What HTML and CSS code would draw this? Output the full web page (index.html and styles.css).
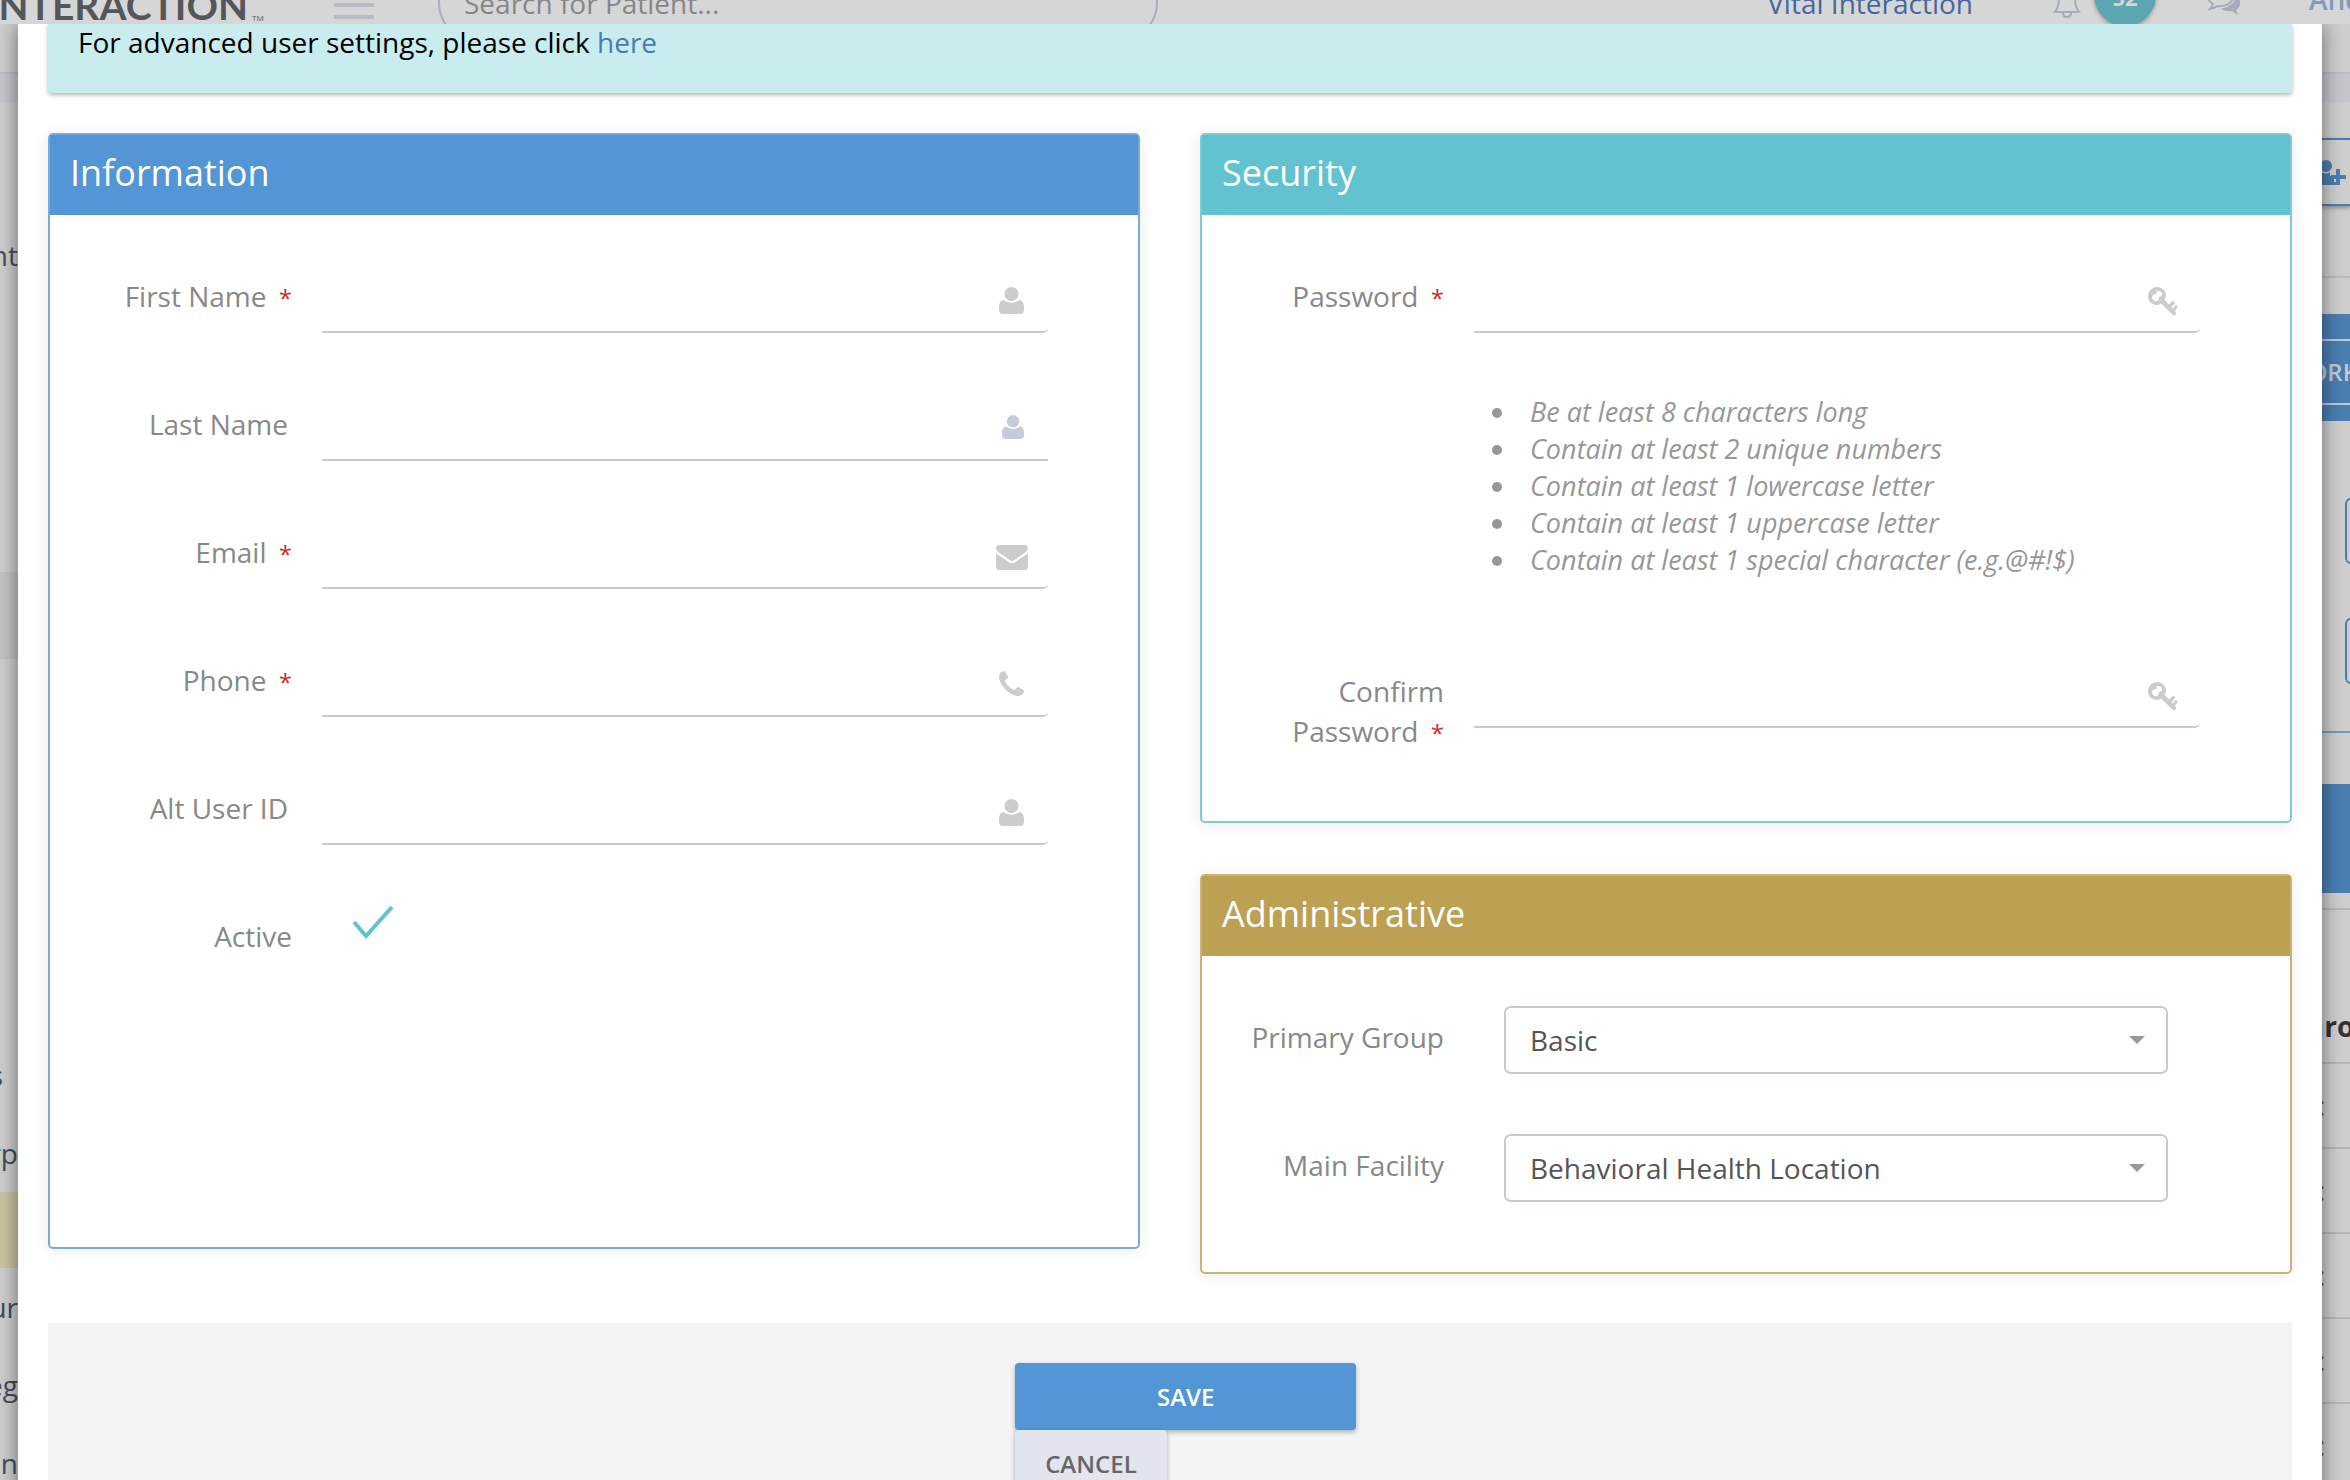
FILE: index.html
```html
<!DOCTYPE html>
<html lang="en">
<head>
    <meta charset="UTF-8">
    <meta name="viewport" content="width=device-width, initial-scale=1.0">
    <title>Edit User</title>
    <link rel="stylesheet" href="styles.css">
</head>
<body>
    <!-- shared icons -->
    <svg class="icon-defs" aria-hidden="true">
        <symbol id="icon-user" viewBox="0 0 25 27">
            <circle cx="12.500" cy="7" r="7"/>
            <path d="M4.500 13Q12.500 18.500 20.500 13Q25 14 25 20V23Q25 27 21 27H4Q0 27 0 23V20Q0 14 4.500 13Z"/>
        </symbol>
        <symbol id="icon-envelope" viewBox="0 256 1792 1408">
            <path d="M1792 710v794q0 66-47 113t-113 47h-1472q-66 0-113-47t-47-113v-794q44 49 101 87 362 246 497 345 57 42 92.500 65.500t94.500 48 110 24.500h2q51 0 110-24.500t94.500-48 92.500-65.500q170-123 498-345 57-39 100-87zm0-294q0 79-49 151t-122 123q-376 261-468 325-10 7-42.500 31t-54 38.500-52 32.500-57.500 27-50 9h-2q-23 0-50-9t-57.500-27-52-32.500-54-38.500-42.500-31q-91-64-262-182.500t-205-142.500q-62-42-117-115.500t-55-136.500q0-78 41.500-130t118.500-52h1472q65 0 112.500 47t47.500 113z"/>
        </symbol>
        <symbol id="icon-phone" viewBox="192 128 1408 1408">
            <path d="M1600 1240q0 27-10 70.500t-21 68.500q-21 50-122 106-94 51-186 51-27 0-53-3.500t-57.500-12.500-47-14.500-55.500-20.500-49-18q-98-35-175-83-127-79-264-216t-216-264q-48-77-83-175-3-9-18-49t-20.500-55.500-14.500-47-12.500-57.500-3.500-53q0-92 51-186 56-101 106-122 25-11 68.500-21t70.500-10q14 0 21 3 18 6 53 76 11 19 30 54t35 63.500 31 53.500q3 4 17.500 25t21.500 35.500 7 28.500q0 20-28.500 50t-62 55-62 53-28.500 46q0 9 5 22.500t8.500 20.500 14 24 11.500 19q76 137 174 235t235 174q2 1 19 11.500t24 14 20.500 8.500 22.500 5q18 0 46-28.500t53-62 55-62 50-28.500q14 0 28.500 7t35.500 21.500 25 17.500q25 15 53.500 31t63.500 35 54 30q70 35 76 53 3 7 3 21z"/>
        </symbol>
        <symbol id="icon-key" viewBox="0 0 30 29">
            <path fill-rule="evenodd" d="M9 0C14 0 18 4 18 8.500Q18 11 16.500 13L21 17.500L24 14.500Q25.500 13.500 26.500 15Q27.500 16 26.500 17L23.500 20L25 21.500L27 18.500Q28 17.500 29.500 19Q30 20 29 21L27 24L28 25.500Q28.500 27 27 28.300Q26 29 25 28L13 16.500Q11 18 8.500 18C4 18 0 14 0 9.500C0 4.500 4 0 9 0ZM9.500 4Q8 4.500 8.500 7Q6 6.500 4.500 8.500C3 11.500 6 15 9 14Q11.500 13 10.500 10Q13.500 10 14 7.500C14 5 12 3.500 9.500 4Z"/>
        </symbol>
    </svg>

    <header class="topbar">
        <div class="topbar-inner">
            <div class="logo">INTERACTION</div>
            <span class="tm">TM</span>
            <button class="menu-toggle" type="button" aria-label="Toggle menu">
                <span></span><span></span><span></span>
            </button>
            <input class="search" type="text" placeholder="Search for Patient..." aria-label="Search for Patient">
            <div class="topbar-right">
                <a class="company" href="#">Vital Interaction</a>
                <svg class="bell" viewBox="0 0 28 34" fill="none" stroke="#a6adb9" stroke-width="2">
                    <path d="M2 28Q6 23 6 14Q6 5 14 5Q22 5 22 14Q22 23 26 28Z"/>
                    <path d="M10 29Q10 33 14 33Q18 33 18 29M14 5V1"/>
                </svg>
                <span class="badge">52</span>
                <svg class="chat" viewBox="0 0 34 30">
                    <path d="M13 1C5 1 1 6 1 11Q1 15 6 18Q5 21 3 23Q8 22 10 20C20 21 26 16 26 11C26 5 20 1 13 1Z" fill="none" stroke="#a6adb9" stroke-width="2"/>
                    <path d="M28 8Q30 19 14 23Q18 26 25 25Q28 28 32 29Q30 27 29 24Q34 21 33 15Q32 10 28 8Z" fill="#a6adb9"/>
                </svg>
                <a class="account" href="#">Andrew</a>
            </div>
        </div>
    </header>

    <div class="layout">
        <!-- page behind the dialog, left edge -->
        <aside class="behind behind-left">
            <div class="subnav"></div>
            <div class="nav-item nav-first">ent</div>
            <div class="nav-active"></div>
            <div class="nav-item nav-short">s</div>
            <div class="nav-item">rp</div>
            <div class="nav-highlight"></div>
            <div class="nav-item">ur</div>
            <div class="nav-item">eg</div>
            <div class="nav-item">in</div>
        </aside>

        <main class="modal">
            <div class="alert">For advanced user settings, please click <a href="#">here</a></div>

            <form>
                <div class="columns">
                    <section class="card card-info">
                        <h2>Information</h2>
                        <div class="card-body">
                            <div class="form-row">
                                <label for="firstName">First Name <span class="required">*</span></label>
                                <div class="field">
                                    <input type="text" id="firstName" required>
                                    <svg class="icon icon-md"><use href="#icon-user"/></svg>
                                </div>
                            </div>
                            <div class="form-row">
                                <label for="lastName" class="optional">Last Name</label>
                                <div class="field">
                                    <input type="text" id="lastName" class="square">
                                    <svg class="icon icon-sm"><use href="#icon-user"/></svg>
                                </div>
                            </div>
                            <div class="form-row">
                                <label for="email">Email <span class="required">*</span></label>
                                <div class="field">
                                    <input type="email" id="email" required>
                                    <svg class="icon icon-lg"><use href="#icon-envelope"/></svg>
                                </div>
                            </div>
                            <div class="form-row">
                                <label for="phone">Phone <span class="required">*</span></label>
                                <div class="field">
                                    <input type="tel" id="phone" required>
                                    <svg class="icon icon-phone"><use href="#icon-phone"/></svg>
                                </div>
                            </div>
                            <div class="form-row">
                                <label for="altUserId" class="optional">Alt User ID</label>
                                <div class="field">
                                    <input type="text" id="altUserId">
                                    <svg class="icon icon-md"><use href="#icon-user"/></svg>
                                </div>
                            </div>
                            <div class="form-row">
                                <label for="active">Active</label>
                                <div class="field check-field">
                                    <input type="checkbox" id="active" checked>
                                    <svg class="check" viewBox="0 0 42 34"><path d="M2 17L14 31L40 2"/></svg>
                                </div>
                            </div>
                        </div>
                    </section>

                    <div class="column">
                        <section class="card card-security">
                            <h2>Security</h2>
                            <div class="card-body">
                                <div class="form-row">
                                    <label for="password">Password <span class="required">*</span></label>
                                    <div class="field">
                                        <input type="password" id="password" required>
                                        <svg class="icon icon-key"><use href="#icon-key"/></svg>
                                    </div>
                                </div>
                                <ul class="rules">
                                    <li>Be at least 8 characters long</li>
                                    <li>Contain at least 2 unique numbers</li>
                                    <li>Contain at least 1 lowercase letter</li>
                                    <li>Contain at least 1 uppercase letter</li>
                                    <li>Contain at least 1 special character (e.g.@#!$)</li>
                                </ul>
                                <div class="form-row">
                                    <label for="confirmPassword">Confirm Password <span class="required">*</span></label>
                                    <div class="field">
                                        <input type="password" id="confirmPassword" required>
                                        <svg class="icon icon-key"><use href="#icon-key"/></svg>
                                    </div>
                                </div>
                            </div>
                        </section>

                        <section class="card card-admin">
                            <h2>Administrative</h2>
                            <div class="card-body">
                                <div class="form-row">
                                    <label for="primaryGroup">Primary Group</label>
                                    <div class="field select-field">
                                        <select id="primaryGroup">
                                            <option>Basic</option>
                                        </select>
                                    </div>
                                </div>
                                <div class="form-row">
                                    <label for="mainFacility">Main Facility</label>
                                    <div class="field select-field">
                                        <select id="mainFacility">
                                            <option>Behavioral Health Location</option>
                                        </select>
                                    </div>
                                </div>
                            </div>
                        </section>
                    </div>
                </div>

                <div class="actions">
                    <button class="btn btn-save" type="submit">SAVE</button>
                    <button class="btn btn-cancel" type="button">CANCEL</button>
                </div>
            </form>
        </main>

        <!-- page behind the dialog, right edge -->
        <aside class="behind behind-right">
            <div class="subnav"></div>
            <div class="add-user">
                <svg viewBox="0 0 34 25">
                    <circle cx="14" cy="6" r="6"/>
                    <path d="M9 12Q14 15 18 12V16H22V22H24V25H4V18Q4 13 9 12Z"/>
                    <path d="M24 9H28V15H34V19H28V25H24V19H19V15H24Z"/>
                </svg>
            </div>
            <div class="rule"></div>
            <div class="work-bar"><div class="work-button"><span>WORK</span></div></div>
            <div class="outline-list">
                <div class="outline-box"></div>
                <div class="outline-box"></div>
            </div>
            <div class="blue-block"></div>
            <div class="group-head"><span>Group</span></div>
            <div class="group-row">:</div>
            <div class="group-row">:</div>
            <div class="group-row">:</div>
            <div class="group-row">:</div>
            <div class="group-row">:</div>
        </aside>
    </div>
</body>
</html>
```
FILE: styles.css
```css
* {
    box-sizing: border-box;
}
body {
    margin: 0;
    height: 100vh;
    overflow: hidden;
    display: flex;
    flex-direction: column;
    background: #cfcfcf;
    font-family: "Open Sans", "Noto Sans", sans-serif;
    font-size: 28px;
    color: #000;
}
a {
    color: #4a7ab5;
    text-decoration: none;
}
.icon-defs {
    display: none;
}

/* top bar, scrolled most of the way out */
.topbar {
    position: relative;
    z-index: 2;
    flex: none;
    height: 24px;
    overflow: hidden;
    background: #d6d6d6;
}
.topbar-inner {
    display: flex;
    align-items: center;
    height: 80px;
    margin-top: -37px;
}
.logo {
    display: flex;
    justify-content: flex-end;
    flex: none;
    width: 248px;
    padding-top: 4px;
    font-family: Lato, sans-serif;
    font-size: 39px;
    font-weight: 700;
    color: #55565a;
}
.tm {
    width: 86px;
    padding: 28px 0 0 4px;
    font-size: 8px;
    color: #55565a;
}
.menu-toggle {
    display: flex;
    flex-direction: column;
    gap: 8px;
    width: 40px;
    padding: 4px 0 0;
    border: 0;
    background: none;
}
.menu-toggle span {
    height: 4px;
    background: #b9bcc8;
}
.search {
    width: 720px;
    height: 76px;
    margin-left: 64px;
    padding: 0 24px;
    border: 2px solid #a9afbd;
    border-radius: 38px;
    background: transparent;
    font: inherit;
}
.search::placeholder {
    color: #85868a;
}
.topbar-right {
    display: flex;
    align-items: center;
    margin-left: auto;
}
.company {
    color: #45689c;
}
.bell {
    width: 28px;
    height: 34px;
    margin-left: 80px;
    margin-bottom: 4px;
}
.badge {
    width: 62px;
    height: 62px;
    margin: 0 51px 16px 13px;
    border-radius: 50%;
    background: #5ca6b2;
    box-shadow: 0 2px 4px rgba(0, 0, 0, 0.3);
    color: #d6d6d6;
    font-size: 22px;
    font-weight: 700;
    line-height: 66px;
    text-align: center;
}
.chat {
    width: 34px;
    height: 30px;
    margin-bottom: 4px;
}
.account {
    width: 41px;
    margin-left: 68px;
    margin-bottom: 8px;
    overflow: hidden;
    color: #7d9cc0;
    font-weight: 600;
}

/* dialog with a sliver of the page on both sides */
.layout {
    flex: 1;
    display: grid;
    grid-template-columns: 18px 1fr 28px;
    min-height: 0;
}
.modal {
    position: relative;
    z-index: 1;
    padding: 0 30px;
    background: #fff;
    box-shadow: 0 0 20px rgba(0, 0, 0, 0.5);
}
.alert {
    height: 69px;
    padding: 0 30px;
    border-radius: 0 0 4px 4px;
    background: #c9ecef;
    box-shadow: 0 2px 4px rgba(0, 0, 0, 0.3);
    line-height: 36px;
}
.columns {
    display: grid;
    grid-template-columns: 1fr 1fr;
    align-items: start;
    gap: 60px;
    margin-top: 40px;
}
.column {
    display: flex;
    flex-direction: column;
    gap: 51px;
}
.card {
    border: 2px solid;
    border-radius: 5px;
    box-shadow: 0 2px 16px rgba(0, 0, 0, 0.08);
}
.card h2 {
    margin: 0;
    padding: 0 20px 4px;
    color: #fff;
    font-size: 36px;
    font-weight: 400;
    line-height: 76px;
}
.card-info {
    min-height: 1116px;
    border-color: #77abd9;
}
.card-info h2 {
    background: #5296d5;
}
.card-security {
    border-color: #7fcad5;
}
.card-security h2 {
    background: #62c2d0;
}
.card-admin {
    border-color: #cbb377;
}
.card-admin h2 {
    background: #bda153;
}
.card-body {
    padding: 50px 90px 70px 46px;
}

/* form rows */
.form-row {
    display: flex;
    align-items: flex-start;
    gap: 30px;
}
.form-row + .form-row {
    margin-top: 60px;
}
.form-row label {
    flex: none;
    width: 196px;
    padding-top: 11px;
    color: #888;
    line-height: 40px;
    text-align: right;
}
.form-row .optional {
    padding-right: 4px;
}
.required {
    margin-left: 5px;
    color: #c9302c;
    font-size: 24px;
    line-height: 24px;
}
.field {
    position: relative;
    flex: 1;
    height: 68px;
}
.field input {
    width: 100%;
    height: 68px;
    padding: 0 70px 0 10px;
    border: 0;
    border-bottom: 2px solid #c4c9d6;
    border-radius: 0 0 5px 0;
    background: transparent;
    font: inherit;
}
.field input.square {
    border-radius: 0;
}
.field input:focus {
    outline: none;
    border-color: #5296d5;
}
.icon {
    position: absolute;
    top: 22px;
    right: 24px;
    fill: #ccc;
    pointer-events: none;
}
.icon-md {
    width: 25px;
    height: 27px;
}
.icon-sm {
    width: 22px;
    height: 24px;
    fill: #c5cbda;
}
.icon-lg {
    top: 24px;
    right: 20px;
    width: 32px;
    height: 25px;
}
.icon-phone {
    width: 25px;
    height: 25px;
}
.icon-key {
    right: 22px;
    width: 30px;
    height: 29px;
}
.check-field input {
    width: 42px;
    margin: 0 0 0 30px;
    opacity: 0;
}
.check {
    position: absolute;
    top: 0;
    left: 30px;
    width: 42px;
    height: 34px;
    fill: none;
    stroke: #62c2d0;
    stroke-width: 4;
    pointer-events: none;
}
.select-field {
    padding: 0 32px 0 30px;
}
.select-field::after {
    content: "";
    position: absolute;
    top: 30px;
    right: 55px;
    border: 8px solid transparent;
    border-top-color: #999;
    border-bottom: 0;
    pointer-events: none;
}
select {
    appearance: none;
    width: 100%;
    height: 68px;
    padding: 0 24px;
    border: 2px solid #c4c9d6;
    border-radius: 7px;
    background: #fff;
    color: #555;
    font: inherit;
}
.rules {
    margin: 60px 0 82px 226px;
    padding: 0 0 0 44px;
    color: #979797;
    font-size: 27px;
    font-style: italic;
    line-height: 37px;
}
.rules li {
    padding-left: 12px;
}

/* buttons */
.actions {
    display: flex;
    flex-direction: column;
    align-items: flex-start;
    margin-top: 49px;
    padding: 40px 0 40px 43.1%;
    background: #f4f4f4;
}
.btn {
    height: 67px;
    padding: 0 30px;
    border: 0;
    border-radius: 4px;
    box-shadow: 0 2px 5px rgba(0, 0, 0, 0.3);
    font: inherit;
    font-size: 24px;
    font-weight: 600;
    cursor: pointer;
}
.btn-save {
    width: 341px;
    background: #5296d5;
    color: #fff;
}
.btn-cancel {
    background: #e2e5ed;
    color: #666;
}

/* page behind */
.behind {
    min-width: 0;
    overflow: hidden;
}
.subnav {
    height: 30px;
    margin-top: 48px;
    border-top: 2px solid #bbbcc6;
    background: #c6c7cc;
}
.nav-item {
    display: flex;
    justify-content: flex-end;
    height: 78px;
    color: #454d5a;
    line-height: 78px;
}
.nav-first {
    height: 470px;
    line-height: 306px;
}
.nav-active {
    height: 87px;
    background: #c2c6c9;
}
.nav-short {
    margin-top: 377px;
    padding-right: 15px;
}
.nav-highlight {
    height: 76px;
    background: #cdc6a3;
}
.add-user {
    height: 68px;
    margin-top: 36px;
    padding-top: 20px;
    border-top: 2px solid #4a7fb3;
    border-bottom: 2px solid #4a7fb3;
    box-shadow: 0 2px 4px rgba(0, 0, 0, 0.3);
}
.add-user svg {
    display: block;
    width: 34px;
    height: 25px;
    margin-left: -10px;
    fill: #4a7fb3;
}
.rule {
    height: 38px;
    margin-top: 70px;
    border-top: 2px solid #bcbcbc;
}
.work-bar {
    height: 107px;
    padding: 25px 0 16px;
    background: #4a7fb3;
}
.work-button {
    display: flex;
    justify-content: flex-end;
    height: 66px;
    border-top: 2px solid #c3cbd4;
    border-bottom: 2px solid #c3cbd4;
    color: #c3cbd4;
    font-size: 24px;
    font-weight: 600;
    line-height: 62px;
}
.work-button span {
    margin-right: -8px;
}
.outline-list {
    height: 312px;
    padding: 77px 0 0 23px;
    border-bottom: 2px solid #6f9cc4;
}
.outline-box {
    width: 60px;
    height: 66px;
    margin-bottom: 54px;
    border: 2px solid #4a7fb3;
    border-radius: 6px;
}
.blue-block {
    height: 109px;
    margin: 51px 0 15px;
    background: #4a7fb3;
}
.group-head {
    height: 154px;
    padding-top: 97px;
    border-top: 2px solid #b8b8b8;
    color: #333;
    font-weight: 700;
}
.group-head span {
    margin-left: -18px;
}
.group-row {
    height: 85px;
    border-top: 2px solid #b8b8b8;
    color: #555;
    line-height: 83px;
    text-indent: -4px;
}
```
